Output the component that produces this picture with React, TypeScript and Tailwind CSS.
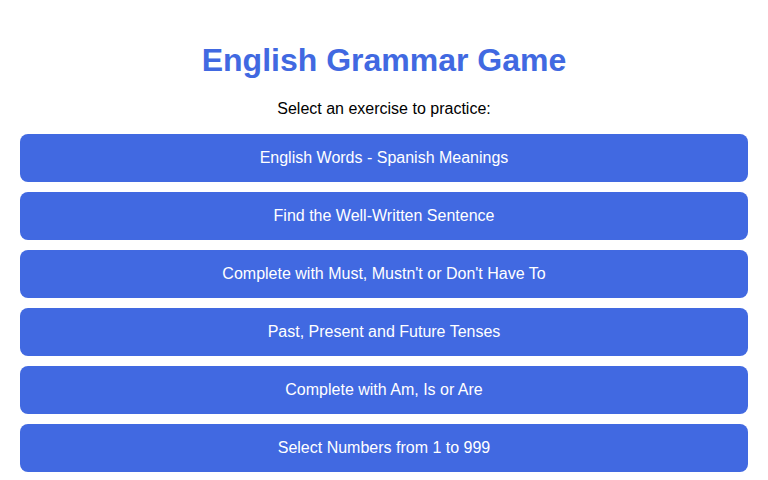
const exercises = [
  "English Words - Spanish Meanings",
  "Find the Well-Written Sentence",
  "Complete with Must, Mustn't or Don't Have To",
  "Past, Present and Future Tenses",
  "Complete with Am, Is or Are",
  "Select Numbers from 1 to 999",
];

export default function App() {
  return (
    <div
      className="min-h-[480px] bg-white px-[20px] pt-[21px] text-center text-black"
      style={{ fontFamily: '"Liberation Sans", Arial, sans-serif' }}
    >
      <h1 className="mt-[21px] text-[32px] font-bold leading-[37px] text-[#4169e1]">
        English Grammar Game
      </h1>
      <p className="mt-[21px] text-[16px] leading-[18px]">Select an exercise to practice:</p>
      <div className="mt-[16px] flex flex-col gap-[10px]">
        {exercises.map((label) => (
          <button
            key={label}
            className="h-[48px] w-full rounded-[8px] bg-[#4169e1] text-[16px] text-white"
          >
            {label}
          </button>
        ))}
      </div>
    </div>
  );
}
